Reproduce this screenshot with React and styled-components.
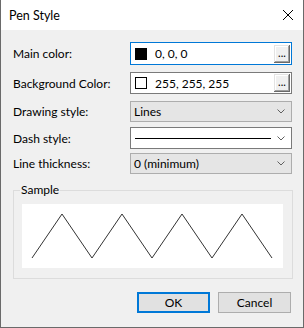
import React from "react";
import styled, { createGlobalStyle } from "styled-components";

const Global = createGlobalStyle`
  html, body { margin: 0; padding: 0; background: #ffffff; }
  * { box-sizing: border-box; }
  body { font-family: Lato, "Liberation Sans", sans-serif; font-size: 12px; color: #000; }
`;

const Window = styled.div`
  width: 304px;
  height: 328px;
  border: 1px solid #6a6a6a;
  border-top: none;
  background: #f0f0f0;
  display: flex;
  flex-direction: column;
`;

const TitleBar = styled.div`
  height: 30px;
  background: #ffffff;
  display: flex;
  align-items: center;
  justify-content: space-between;
  padding: 0 10px 0 8px;
  flex-shrink: 0;
`;

const Title = styled.span`
  font-size: 12.5px;
  margin-top: 1px;
`;

const Body = styled.div`
  padding: 12px 11px 0 11px;
  display: flex;
  flex-direction: column;
`;

const Row = styled.div`
  display: grid;
  grid-template-columns: 118px 162px;
  align-items: center;
  margin-top: ${(p) => p.$mt || 0}px;
  height: ${(p) => p.$h}px;
`;

const Label = styled.span`
  padding-left: 1px;
`;

const ColorField = styled.div`
  height: 100%;
  background: #fff;
  border: 1px solid ${(p) => (p.$focused ? "#0078d7" : "#7a7a7a")};
  display: flex;
  align-items: center;
  padding: 0 1px 0 4px;
`;

const Swatch = styled.span`
  width: 12px;
  height: 12px;
  background: ${(p) => p.$color};
  border: 1px solid #000;
  flex-shrink: 0;
`;

const ColorText = styled.span`
  margin-left: 8px;
  flex: 1;
`;

const DotsButton = styled.button`
  width: 16px;
  height: 18px;
  padding: 0;
  margin: 0;
  font: inherit;
  font-size: 11px;
  line-height: 10px;
  background: #f0f0f0;
  border: none;
  box-shadow: inset -1px -1px 0 #696969, inset 1px 1px 0 #e3e3e3,
    inset -2px -2px 0 #a0a0a0, inset 2px 2px 0 #ffffff;
  display: flex;
  align-items: center;
  justify-content: center;
  padding-bottom: 2px;
`;

const Combo = styled.div`
  height: 100%;
  border: 1px solid ${(p) => (p.$white ? "#7a7a7a" : "#adadad")};
  background: ${(p) => (p.$white ? "#ffffff" : "#e5e5e5")};
  display: flex;
  align-items: center;
  padding: 0 6px 0 3px;
  gap: 6px;
`;

const ComboText = styled.span`
  flex: 1;
`;

const DashLine = styled.span`
  flex: 1;
  height: 1px;
  background: #000;
  margin-left: 1px;
`;

const Chevron = () => (
  <svg width="8" height="5" viewBox="0 0 8 5">
    <path d="M0.5 0.5 L4 4 L7.5 0.5" stroke="#606060" strokeWidth="1" fill="none" />
  </svg>
);

const Group = styled.fieldset`
  margin: 9px 0 0 1px;
  width: 280px;
  border: 1px solid #dcdcdc;
  padding: 7px 9px 10px 8px;
`;

const Legend = styled.legend`
  padding: 0 1px;
  margin-left: -2px;
  line-height: 14px;
`;

const Sample = styled.div`
  height: 64px;
  background: #ffffff;
`;

const Buttons = styled.div`
  display: flex;
  justify-content: flex-end;
  gap: 8px;
  margin-top: 13px;
  padding-right: 1px;
`;

const Button = styled.button`
  width: 73px;
  height: 21px;
  font: inherit;
  color: #000;
  background: #e1e1e1;
  border: ${(p) => (p.$default ? "2px solid #0078d7" : "1px solid #adadad")};
  padding: 0;
`;

export default function App() {
  return (
    <>
      <Global />
      <Window>
        <TitleBar>
          <Title>Pen Style</Title>
          <svg width="10" height="10" viewBox="0 0 10 10">
            <path d="M0 0 L10 10 M10 0 L0 10" stroke="#000" strokeWidth="1" />
          </svg>
        </TitleBar>
        <Body>
          <Row $h={23}>
            <Label>Main color:</Label>
            <ColorField $focused>
              <Swatch $color="#000" />
              <ColorText>0, 0, 0</ColorText>
              <DotsButton>...</DotsButton>
            </ColorField>
          </Row>
          <Row $h={22} $mt={7}>
            <Label>Background Color:</Label>
            <ColorField>
              <Swatch $color="#fff" />
              <ColorText>255, 255, 255</ColorText>
              <DotsButton>...</DotsButton>
            </ColorField>
          </Row>
          <Row $h={21} $mt={7}>
            <Label>Drawing style:</Label>
            <Combo>
              <ComboText>Lines</ComboText>
              <Chevron />
            </Combo>
          </Row>
          <Row $h={22} $mt={5}>
            <Label>Dash style:</Label>
            <Combo $white>
              <DashLine />
              <Chevron />
            </Combo>
          </Row>
          <Row $h={21} $mt={4}>
            <Label>Line thickness:</Label>
            <Combo>
              <ComboText>0 (minimum)</ComboText>
              <Chevron />
            </Combo>
          </Row>
          <Group>
            <Legend>Sample</Legend>
            <Sample>
              <svg width="261" height="64" viewBox="0 0 261 64">
                <polyline
                  points="10,54 40,10 70,54 100,10 130,54 160,10 190,54 220,10 250,54"
                  fill="none"
                  stroke="#333"
                  strokeWidth="1"
                />
              </svg>
            </Sample>
          </Group>
          <Buttons>
            <Button $default>OK</Button>
            <Button>Cancel</Button>
          </Buttons>
        </Body>
      </Window>
    </>
  );
}
